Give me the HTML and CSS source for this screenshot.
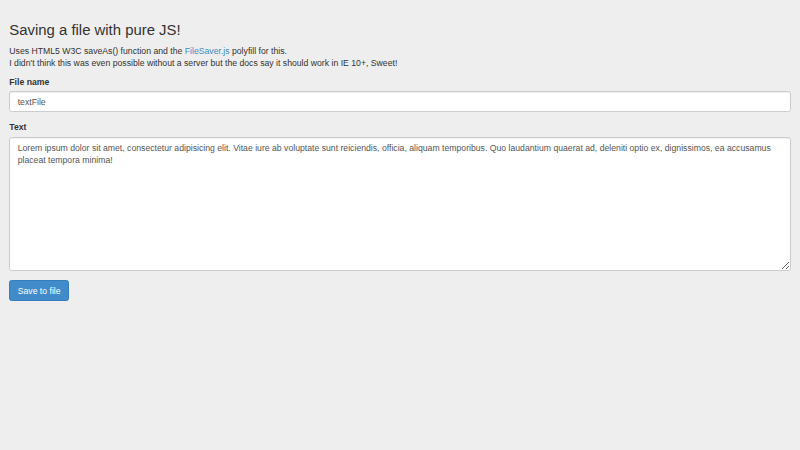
FILE: index.html
```html
<!DOCTYPE html>
<html lang="en">
<head>
    <meta charset="UTF-8">
    <meta name="viewport" content="width=device-width, initial-scale=1.0">
    <title>Saving a file with pure JS!</title>
    <link rel="stylesheet" href="styles.css">
</head>
<body>
    <div class="container">
        <h3 class="title">Saving a file with pure JS!</h3>
        <p class="intro">
            Uses HTML5 W3C saveAs() function and the <a href="#">FileSaver.js</a> polyfill for this.<br>
            I didn't think this was even possible without a server but the docs say it should work in IE 10+, Sweet!
        </p>

        <form class="save-form" onsubmit="return false;">
            <div class="form-group">
                <label for="fileName">File name</label>
                <input type="text" id="fileName" class="form-control" value="textFile">
            </div>
            <div class="form-group">
                <label for="text">Text</label>
                <textarea id="text" class="form-control text-area">Lorem ipsum dolor sit amet, consectetur adipisicing elit. Vitae iure ab voluptate sunt reiciendis, officia, aliquam temporibus. Quo laudantium quaerat ad, deleniti optio ex, dignissimos, ea accusamus placeat tempora minima!</textarea>
            </div>
            <button type="submit" class="btn">Save to file</button>
        </form>
    </div>
</body>
</html>
```

FILE: styles.css
```css
body {
    font-family: "Liberation Sans", Arial, sans-serif;
    font-size: 8.68px;
    line-height: 12.4px;
    color: #333;
    background-color: #eee;
    margin: 0;
    padding: 0;
}
a {
    color: #428bca;
    text-decoration: none;
}
.container {
    padding: 0 9.3px;
}
.title {
    font-size: 14.9px;
    font-weight: 500;
    line-height: 16.4px;
    margin: 22px 0 6.2px;
}
.intro {
    margin: 0 0 6.2px;
}
.form-group {
    margin-bottom: 9.3px;
}
.form-group label {
    display: block;
    font-weight: bold;
    margin-bottom: 3.1px;
}
.form-control {
    display: block;
    box-sizing: border-box;
    width: 100%;
    height: 21px;
    padding: 3.7px 7.4px;
    font-family: inherit;
    font-size: 8.68px;
    line-height: 12.4px;
    color: #555;
    background-color: #fff;
    border: 1px solid #ccc;
    border-radius: 2.5px;
    box-shadow: inset 0 1px 1px rgba(0, 0, 0, 0.075);
    margin: 0;
}
.text-area {
    height: 134px;
}
.btn {
    display: inline-block;
    height: 21px;
    padding: 3.7px 7.4px;
    font-family: inherit;
    font-size: 8.68px;
    line-height: 12.4px;
    color: #fff;
    background-color: #428bca;
    border: 1px solid #357ebd;
    border-radius: 2.5px;
    cursor: pointer;
}
.btn:hover {
    background-color: #3071a9;
}
```
